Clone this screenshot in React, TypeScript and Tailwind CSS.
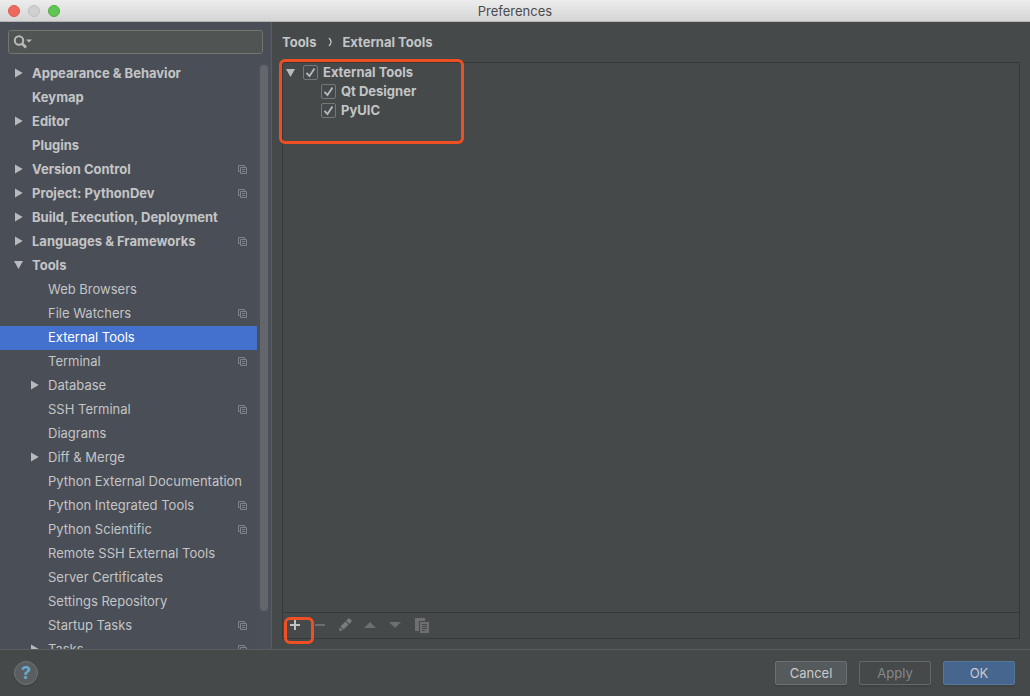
import { useState } from 'react';
import clsx from 'clsx';

type Item = {
  label: string;
  level: 0 | 1;
  arrow?: 'open' | 'closed';
  project?: boolean;
};

const items: Item[] = [
  { label: 'Appearance & Behavior', level: 0, arrow: 'closed' },
  { label: 'Keymap', level: 0 },
  { label: 'Editor', level: 0, arrow: 'closed' },
  { label: 'Plugins', level: 0 },
  { label: 'Version Control', level: 0, arrow: 'closed', project: true },
  { label: 'Project: PythonDev', level: 0, arrow: 'closed', project: true },
  { label: 'Build, Execution, Deployment', level: 0, arrow: 'closed' },
  { label: 'Languages & Frameworks', level: 0, arrow: 'closed', project: true },
  { label: 'Tools', level: 0, arrow: 'open' },
  { label: 'Web Browsers', level: 1 },
  { label: 'File Watchers', level: 1, project: true },
  { label: 'External Tools', level: 1 },
  { label: 'Terminal', level: 1, project: true },
  { label: 'Database', level: 1, arrow: 'closed' },
  { label: 'SSH Terminal', level: 1, project: true },
  { label: 'Diagrams', level: 1 },
  { label: 'Diff & Merge', level: 1, arrow: 'closed' },
  { label: 'Python External Documentation', level: 1 },
  { label: 'Python Integrated Tools', level: 1, project: true },
  { label: 'Python Scientific', level: 1, project: true },
  { label: 'Remote SSH External Tools', level: 1 },
  { label: 'Server Certificates', level: 1 },
  { label: 'Settings Repository', level: 1 },
  { label: 'Startup Tasks', level: 1, project: true },
  { label: 'Tasks', level: 1, arrow: 'closed', project: true },
];

function Arrow({ open }: { open?: boolean }) {
  return (
    <svg width="10" height="10" viewBox="0 0 10 10" fill="#b9babb" className="shrink-0" aria-hidden="true">
      <path d={open ? 'M0 1h9L4.500 9z' : 'M1 0.500v9L8.700 5z'} />
    </svg>
  );
}

function ProjectIcon() {
  return (
    <svg width="9" height="9" viewBox="0 0 9 9" fill="none" stroke="#7f8488" className="shrink-0" aria-hidden="true">
      <path d="M2 6.500H0.500v-6h6V2" />
      <path d="M2.500 2.500h6v6h-6zM4 4.500h3M4 6.500h3" />
    </svg>
  );
}

function Check({ id, label }: { id: string; label: string }) {
  return (
    <div className="flex items-center gap-[5px]">
      <span className="grid size-[15px] place-items-center">
        <input
          id={id}
          type="checkbox"
          defaultChecked
          className="peer col-start-1 row-start-1 size-[15px] appearance-none rounded-[2px] border border-[#747879] bg-[#45494b]"
        />
        <svg
          width="15"
          height="15"
          viewBox="0 0 15 15"
          fill="none"
          stroke="#b8babb"
          strokeWidth="1.8"
          className="pointer-events-none invisible col-start-1 row-start-1 peer-checked:visible"
          aria-hidden="true"
        >
          <path d="M3.500 7.800l3 3.200 5-7.500" />
        </svg>
      </span>
      <label htmlFor={id} className="font-bold">{label}</label>
    </div>
  );
}

function Sidebar() {
  const [selected, setSelected] = useState('External Tools');

  return (
    <aside className="flex w-[272px] shrink-0 flex-col border-r border-[#5a5e61] bg-[#4a4e57]">
      <div className="mx-2 mt-2 flex h-6 shrink-0 items-center rounded-[3px] border border-[#72766f] bg-[#505452] px-1">
        <svg width="20" height="14" viewBox="0 0 20 14" fill="none" className="shrink-0" aria-hidden="true">
          <circle cx="6" cy="5.500" r="4.200" stroke="#b8babb" strokeWidth="2" />
          <path d="M9 8.500l4 4" stroke="#b8babb" strokeWidth="2.600" />
          <path d="M13 4.500h6l-3 3z" fill="#b8babb" />
        </svg>
        <input aria-label="Search settings" className="min-w-0 flex-1 bg-transparent text-[#c4c5c6] outline-none" />
      </div>

      <div className="mt-2 flex min-h-0 flex-1">
        <nav className="min-w-0 flex-1 overflow-hidden">
          <ul>
            {items.map(item => (
              <li key={item.label}>
                <button
                  onClick={() => setSelected(item.label)}
                  className={clsx(
                    'flex h-6 w-full items-center pr-[10px] pb-0.5 text-left whitespace-nowrap',
                    item.level === 0 ? 'pl-[14px] font-bold' : 'pl-[30px]',
                    selected === item.label ? 'bg-[#4371cd] text-white' : 'text-[#c4c5c6]',
                  )}
                >
                  <span className="flex w-[18px] shrink-0">
                    {item.arrow && <Arrow open={item.arrow === 'open'} />}
                  </span>
                  <span className="flex-1">{item.label}</span>
                  {item.project && <ProjectIcon />}
                </button>
              </li>
            ))}
          </ul>
        </nav>
        {/* Scrollbar */}
        <div className="w-[14px] shrink-0 bg-[#4b4f58] px-[3px] pt-[3px] pb-[38px]">
          <div className="h-full rounded-full bg-[#63666b]" />
        </div>
      </div>
    </aside>
  );
}

function Toolbar() {
  const button = 'flex size-[25px] items-center justify-center pr-px pb-px';

  return (
    <div className="flex h-[26px] border-t border-[#36393a]">
      <div className="relative">
        <button aria-label="Add" className={button}>
          <svg width="10" height="10" viewBox="0 0 10 10" fill="#c0c1c2">
            <path d="M4 0h2v4h4v2H6v4H4V6H0V4h4z" />
          </svg>
        </button>
        <div className="pointer-events-none absolute top-1 left-px h-[27px] w-[30px] rounded-md border-[3px] border-[#f04f23]" />
      </div>
      <button aria-label="Remove" disabled className={button}>
        <svg width="10" height="10" viewBox="0 0 10 10" fill="#6d6f70">
          <path d="M0 4h10v2H0z" />
        </svg>
      </button>
      <button aria-label="Edit" disabled className={button}>
        <svg width="14" height="14" viewBox="0 0 14 14" fill="#797b7c">
          <path d="M7.400 3.400l3.200 3.200-5 5-3.200-3.200zM1.800 9.200l3 3L1 13z" />
          <path d="M8.100 2.700L10 0.800a1.400 1.400 0 0 1 2 0l1.200 1.200a1.400 1.400 0 0 1 0 2l-1.900 1.900z" />
        </svg>
      </button>
      <button aria-label="Move up" disabled className={button}>
        <svg width="12" height="6" viewBox="0 0 12 6" fill="#6d6f70">
          <path d="M0 6l6-6 6 6z" />
        </svg>
      </button>
      <button aria-label="Move down" disabled className={button}>
        <svg width="12" height="6" viewBox="0 0 12 6" fill="#6d6f70">
          <path d="M0 0h12L6 6z" />
        </svg>
      </button>
      <button aria-label="Copy" disabled className="flex h-[25px] w-[27px] items-center justify-center">
        <svg width="14" height="15" viewBox="0 0 14 15" fill="#6d6f70">
          <path d="M0 0h10v3H4v10H0z" />
          <path d="M5 4h9v11H5zM7 6v1h5V6zM7 8v1h5V8zM7 10v1h5v-1zM7 12v1h3v-1z" fillRule="evenodd" />
        </svg>
      </button>
    </div>
  );
}

function ExternalTools() {
  return (
    <main className="flex min-w-0 flex-1 flex-col px-[10px] pb-[10px] text-[#c4c5c6]">
      <div className="flex h-10 shrink-0 items-center font-bold">
        <span>Tools</span>
        <svg width="26" height="10" viewBox="0 0 26 10" fill="none" stroke="#c4c5c6" strokeWidth="1.300" aria-hidden="true">
          <path d="M13 1c2.700 2.600 2.700 5.400 0 8" />
        </svg>
        <h1>External Tools</h1>
      </div>

      <section className="relative flex min-h-0 flex-1 flex-col border border-[#36393a]">
        <ul className="flex-1 leading-[19px]">
          <li>
            <div className="flex items-center gap-[7px] pl-[3px]">
              <Arrow open />
              <Check id="external-tools" label="External Tools" />
            </div>
            <ul className="pl-[38px]">
              <li><Check id="qt-designer" label="Qt Designer" /></li>
              <li><Check id="pyuic" label="PyUIC" /></li>
            </ul>
          </li>
        </ul>
        <Toolbar />
        {/* Highlight around the tool group */}
        <div className="pointer-events-none absolute -top-1 -left-1 h-[85px] w-[185px] rounded-md border-[3px] border-[#f04f23]" />
      </section>
    </main>
  );
}

export default function App() {
  const dialogButton = 'h-6 w-[72px] rounded-[2px] border shadow-[0_2px_0_#404344]';

  return (
    <div className="flex h-screen flex-col bg-[#45494a] font-['Inter','Liberation_Sans',sans-serif] text-[13px] leading-4">
      <header className="grid h-[22px] shrink-0 grid-cols-[1fr_auto_1fr] items-center border-b border-[#b5b5b5] bg-linear-to-b from-[#ededed] to-[#d5d5d5] text-[#4b4b4b]">
        <div className="flex gap-2 pl-2">
          <button aria-label="Close" className="size-3 rounded-full border border-[#dc5a50] bg-[#ee6a5f]" />
          <button aria-label="Minimize" disabled className="size-3 rounded-full border border-[#bfbfbf] bg-[#d0d0d0]" />
          <button aria-label="Zoom" className="size-3 rounded-full border border-[#52ac43] bg-[#61c554]" />
        </div>
        <span>Preferences</span>
      </header>

      <div className="flex min-h-0 flex-1">
        <Sidebar />
        <ExternalTools />
      </div>

      <footer className="flex h-[47px] shrink-0 items-center gap-3 border-t border-[#5a5e61] pr-[15px] pl-[14px]">
        <button
          aria-label="Help"
          className="mr-auto size-6 rounded-full border border-[#707475] bg-[#5a5e60] text-lg leading-5 font-bold text-[#6aa9cf] shadow-[0_2px_0_#404344]"
        >
          ?
        </button>
        <button className={clsx(dialogButton, 'border-[#6b7071] bg-[#555a5c] text-[#c9cacb]')}>Cancel</button>
        <button disabled className={clsx(dialogButton, 'border-[#646869] text-[#85888a]')}>Apply</button>
        <button className={clsx(dialogButton, 'border-[#54789a] bg-[#46658f] text-[#c9cacb]')}>OK</button>
      </footer>
    </div>
  );
}
